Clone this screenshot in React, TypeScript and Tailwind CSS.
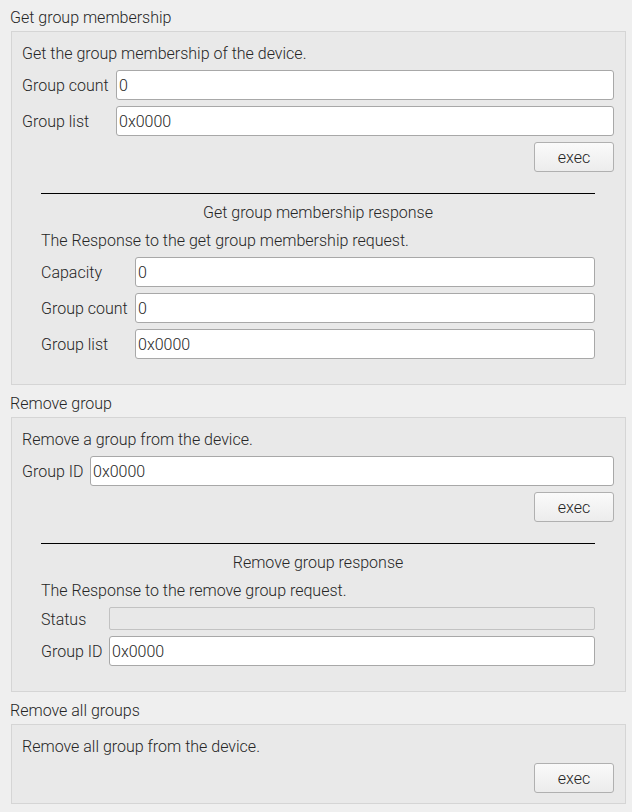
import React from 'react';

const font = { fontFamily: 'Roboto, "Liberation Sans", sans-serif' };

function Field({ label, value, labelW, disabled }: { label: string; value?: string; labelW: string; disabled?: boolean }) {
  return (
    <div className="flex items-center">
      <div className={`${labelW} shrink-0 h-[22px] pt-px leading-[22px]`}>{label}</div>
      {disabled ? (
        <div className="flex-1 h-[23px] border border-[#c2c2c2] bg-[#e8e8e8] rounded-[2px]" />
      ) : (
        <div className="flex-1 h-[30px] border border-[#a8a8a8] bg-white rounded-[3px] pl-[2px] pt-px flex items-center leading-[22px]">
          {value}
        </div>
      )}
    </div>
  );
}

function ExecButton() {
  return (
    <div className="flex justify-end">
      <button className="w-[80px] h-[30px] border border-[#b0b0b0] rounded-[3px] bg-gradient-to-b from-[#fafafa] to-[#ececec] text-[#222] pt-px leading-[22px]">
        exec
      </button>
    </div>
  );
}

function Text({ children, center }: { children: React.ReactNode; center?: boolean }) {
  return <div className={`h-[22px] pt-px leading-[22px] ${center ? 'text-center' : ''}`}>{children}</div>;
}

function Response({ title, desc, children }: { title: string; desc: string; children: React.ReactNode }) {
  return (
    <div className="mx-[19px] mt-[21px]">
      <div className="h-px bg-black" />
      <div className="mt-[7px]">
        <Text center>{title}</Text>
      </div>
      <div className="mt-[6px]">
        <Text>{desc}</Text>
      </div>
      <div className="mt-[6px] flex flex-col gap-[6px]">{children}</div>
    </div>
  );
}

function Section({ title, children, pb }: { title: string; children: React.ReactNode; pb: string }) {
  return (
    <div>
      <div className="ml-[10px] h-[24px] pt-px leading-[24px]">{title}</div>
      <div className={`mt-[2px] ml-[11px] mr-[6px] border border-[#d5d5d5] bg-[#e9e9e9] pl-[10px] pr-[11px] pt-[10px] ${pb}`}>
        {children}
      </div>
    </div>
  );
}

export default function App() {
  return (
    <div className="w-[632px] h-[812px] bg-[#efefef] text-[#262626] text-[16px] font-light pt-[5px] flex flex-col gap-[6px] overflow-hidden" style={font}>
      <Section title="Get group membership" pb="pb-[25px]">
        <Text>Get the group membership of the device.</Text>
        <div className="mt-[6px] flex flex-col gap-[6px]">
          <Field label="Group count" value="0" labelW="w-[94px]" />
          <Field label="Group list" value="0x0000" labelW="w-[94px]" />
          <ExecButton />
        </div>
        <Response title="Get group membership response" desc="The Response to the get group membership request.">
          <Field label="Capacity" value="0" labelW="w-[94px]" />
          <Field label="Group count" value="0" labelW="w-[94px]" />
          <Field label="Group list" value="0x0000" labelW="w-[94px]" />
        </Response>
      </Section>

      <Section title="Remove group" pb="pb-[25px]">
        <Text>Remove a group from the device.</Text>
        <div className="mt-[6px] flex flex-col gap-[6px]">
          <Field label="Group ID" value="0x0000" labelW="w-[68px]" />
          <ExecButton />
        </div>
        <Response title="Remove group response" desc="The Response to the remove group request.">
          <Field label="Status" labelW="w-[68px]" disabled />
          <Field label="Group ID" value="0x0000" labelW="w-[68px]" />
        </Response>
      </Section>

      <Section title="Remove all groups" pb="pb-[10px]">
        <Text>Remove all group from the device.</Text>
        <div className="mt-[6px]">
          <ExecButton />
        </div>
      </Section>
    </div>
  );
}
